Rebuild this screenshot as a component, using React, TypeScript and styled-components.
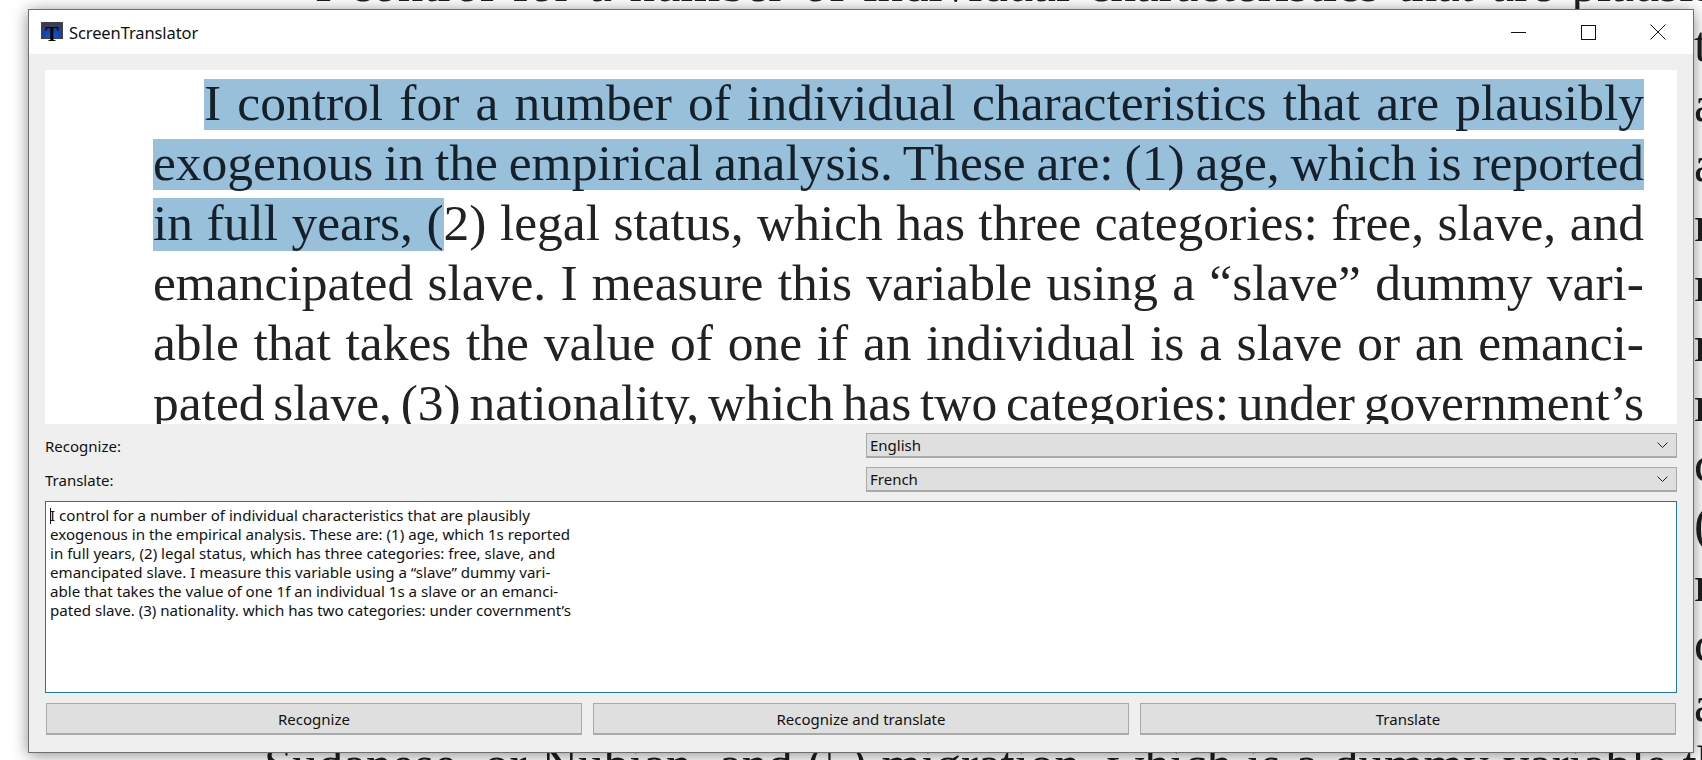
import React from "react";
import styled, { createGlobalStyle } from "styled-components";

const Global = createGlobalStyle`
  html, body { margin: 0; padding: 0; height: 100%; overflow: hidden; background: #fff; }
  #root { height: 100%; }
`;

const Desktop = styled.div`
  position: relative;
  width: 1702px;
  height: 760px;
  overflow: hidden;
  background: #fff;
`;

const Page = styled.div`
  margin-top: -46px;
  font-family: "Liberation Serif", serif;
  font-size: 51px;
  line-height: 60px;
  color: #1e1e1e;
`;

const PageLine = styled.div<{ $left: number; $spread?: number }>`
  height: 60px;
  padding-left: ${(p) => p.$left}px;
  white-space: nowrap;
  word-spacing: ${(p) => p.$spread ?? 0}px;
`;

const Window = styled.div`
  position: absolute;
  left: 28px;
  top: 9px;
  width: 1664px;
  display: flex;
  flex-direction: column;
  background: #efefef;
  border: 1px solid #6f6f6f;
  box-shadow: 0 2px 15px rgba(0, 0, 0, 0.45);
  font-family: "Noto Sans", sans-serif;
  font-size: 15px;
  color: #111;
`;

const TitleBar = styled.header`
  height: 44px;
  display: flex;
  align-items: center;
  background: #fff;
`;

const AppIcon = styled.svg`
  width: 22px;
  height: 21px;
  margin-left: 12px;
  margin-right: 6px;
`;

const Title = styled.span`
  flex: 1;
  font-size: 16.5px;
  letter-spacing: -0.1px;
`;

const CaptionButton = styled.button`
  width: 70px;
  height: 44px;
  display: grid;
  place-items: center;
  padding: 0;
  border: 0;
  background: transparent;
  color: #111;
`;

const Body = styled.main`
  display: flex;
  flex-direction: column;
  padding: 16px 16px 17px;
`;

const Preview = styled.section`
  height: 345px;
  padding: 9px 33px 0 108px;
  overflow: hidden;
  background: #fff;
  font-family: "Liberation Serif", serif;
  font-size: 51.5px;
  color: #222;
`;

const ProseLine = styled.div<{ $selected?: boolean; $indent?: number; $tight?: number }>`
  height: 51px;
  line-height: 48px;
  margin-bottom: 9px;
  margin-left: ${(p) => p.$indent ?? 0}px;
  white-space: nowrap;
  text-align: justify;
  text-align-last: justify;
  word-spacing: ${(p) => p.$tight ?? 0}px;
  ${(p) => (p.$selected ? "background: #98c0da; color: #15202a;" : "")}
`;

const Mark = styled.span`
  color: #15202a;
  background: linear-gradient(#98c0da, #98c0da) 0 100% / 100% 53px no-repeat;
`;

const LanguageRow = styled.div`
  display: grid;
  grid-template-columns: 821px 811px;
  align-items: center;
  margin-top: 9px;
`;

const FieldLabel = styled.label`
  font-size: 15px;
`;

const Combo = styled.div`
  height: 25px;
  box-sizing: border-box;
  display: flex;
  align-items: center;
  justify-content: space-between;
  padding: 0 8px 0 3px;
  background: #dfdfdf;
  border: 1px solid #a9a9a9;
  border-bottom-width: 2px;
  font-size: 15px;
`;

const TextEdit = styled.div`
  height: 192px;
  box-sizing: border-box;
  margin: 9px 0 0;
  padding: 4px 4px;
  background: #fff;
  border: 1px solid #2077ad;
  font-size: 15.1px;
  line-height: 19px;
  color: #111;
  white-space: pre;
`;

const Caret = styled.span`
  display: inline-block;
  width: 1px;
  height: 16px;
  margin-right: -1px;
  vertical-align: -3px;
  background: #111;
`;

const ButtonRow = styled.div`
  display: grid;
  grid-template-columns: repeat(3, 1fr);
  gap: 11px;
  margin: 10px 1px 0;
`;

const ActionButton = styled.button`
  height: 32px;
  padding: 0;
  background: #dfdfdf;
  border: 1px solid #a9a9a9;
  border-bottom-width: 2px;
  font-family: inherit;
  font-size: 15px;
  color: #111;
`;

const Chevron = () => (
  <svg width="11" height="6" viewBox="0 0 11 6" fill="none" stroke="#222" strokeWidth="1">
    <path d="M0.5 0.5 L5.5 5.5 L10.5 0.5" />
  </svg>
);

const ocrLines = [
  "I control for a number of individual characteristics that are plausibly",
  "exogenous in the empirical analysis. These are: (1) age, which 1s reported",
  "in full years, (2) legal status, which has three categories: free, slave, and",
  "emancipated slave. I measure this variable using a “slave” dummy vari-",
  "able that takes the value of one 1f an individual 1s a slave or an emanci-",
  "pated slave. (3) nationality. which has two categories: under covernment’s",
];

const pageEdge = ["t", "a", "a", "ne", "n", "r", "r", "c", "(", "n", "c", "a"];

export default function App() {
  return (
    <Desktop>
      <Global />
      <Page>
        <PageLine $left={315} $spread={5}>
          I control for a number of individual characteristics that are plausibly
        </PageLine>
        {pageEdge.map((glyph, i) => (
          <PageLine key={i} $left={1694}>
            {glyph}
          </PageLine>
        ))}
        <PageLine $left={264} $spread={2}>
          Sudanese, or Nubian, and (5) migration, which is a dummy variable that
        </PageLine>
      </Page>
      <Window>
        <TitleBar>
          <AppIcon viewBox="0 0 22 21">
            <defs>
              <radialGradient id="tile" cx="50%" cy="85%" r="70%">
                <stop offset="0%" stopColor="#0a5cf0" />
                <stop offset="60%" stopColor="#1640a8" />
                <stop offset="100%" stopColor="#3a3f4e" />
              </radialGradient>
            </defs>
            <rect x="0.5" y="0.5" width="21" height="16" fill="url(#tile)" stroke="#444" />
            <text x="11" y="19" textAnchor="middle" fontFamily="Liberation Serif" fontWeight="700" fontSize="20" fill="#050505">
              T
            </text>
          </AppIcon>
          <Title>ScreenTranslator</Title>
          <CaptionButton aria-label="Minimize">
            <svg width="15" height="15" viewBox="0 0 15 15" stroke="#111" fill="none">
              <path d="M0 7.5H15" />
            </svg>
          </CaptionButton>
          <CaptionButton aria-label="Maximize">
            <svg width="15" height="15" viewBox="0 0 15 15" stroke="#111" fill="none">
              <rect x="0.5" y="0.5" width="14" height="14" />
            </svg>
          </CaptionButton>
          <CaptionButton aria-label="Close">
            <svg width="16" height="16" viewBox="0 0 16 16" stroke="#111" fill="none">
              <path d="M0.5 0.5L15.5 15.5M15.5 0.5L0.5 15.5" />
            </svg>
          </CaptionButton>
        </TitleBar>
        <Body>
          <Preview>
            <ProseLine $selected $indent={51}>
              I control for a number of individual characteristics that are plausibly
            </ProseLine>
            <ProseLine $selected $tight={-4}>
              exogenous in the empirical analysis. These are: (1) age, which is reported
            </ProseLine>
            <ProseLine $tight={-4}>
              <Mark>in full years, (</Mark>2) legal status, which has three categories: free, slave, and
            </ProseLine>
            <ProseLine>emancipated slave. I measure this variable using a “slave” dummy vari-</ProseLine>
            <ProseLine>able that takes the value of one if an individual is a slave or an emanci-</ProseLine>
            <ProseLine $tight={-8}>
              pated slave, (3) nationality, which has two categories: under government’s
            </ProseLine>
          </Preview>
          <LanguageRow>
            <FieldLabel>Recognize:</FieldLabel>
            <Combo>
              English
              <Chevron />
            </Combo>
          </LanguageRow>
          <LanguageRow>
            <FieldLabel>Translate:</FieldLabel>
            <Combo>
              French
              <Chevron />
            </Combo>
          </LanguageRow>
          <TextEdit>
            <Caret />
            {ocrLines.join("\n")}
          </TextEdit>
          <ButtonRow>
            <ActionButton>Recognize</ActionButton>
            <ActionButton>Recognize and translate</ActionButton>
            <ActionButton>Translate</ActionButton>
          </ButtonRow>
        </Body>
      </Window>
    </Desktop>
  );
}
